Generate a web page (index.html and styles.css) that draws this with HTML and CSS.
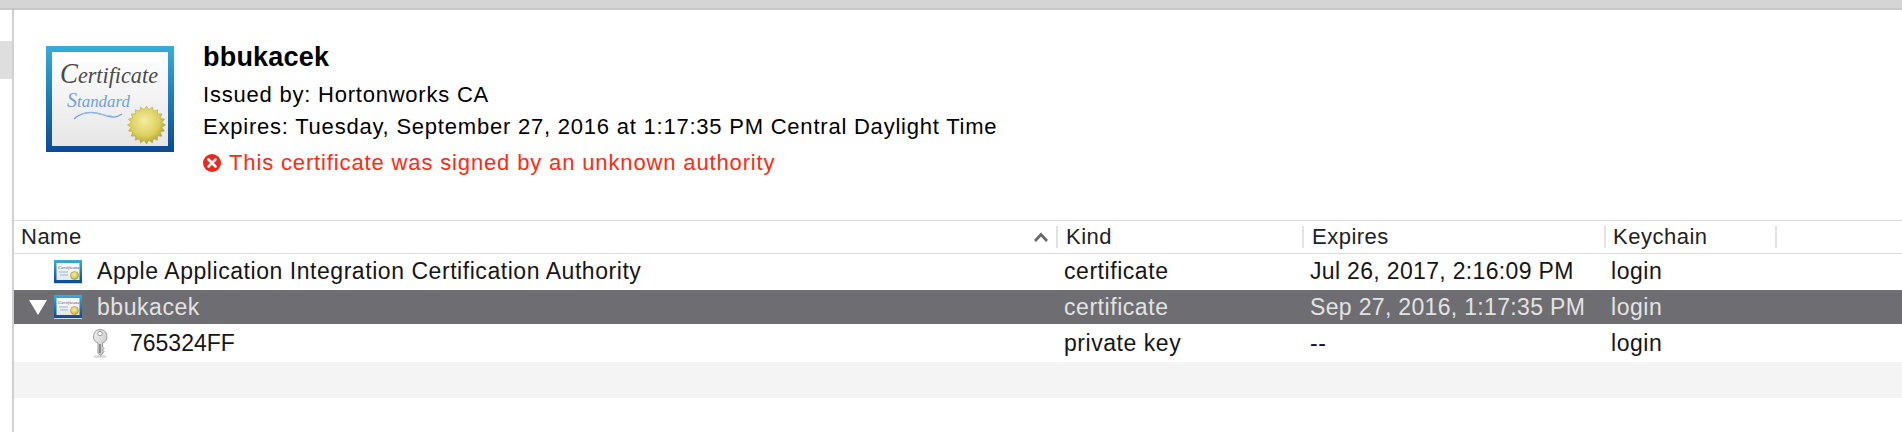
FILE: index.html
```html
<!DOCTYPE html>
<html lang="en">
<head>
<meta charset="utf-8">
<title>Certificate</title>
<link rel="stylesheet" href="styles.css">
</head>
<body>
<svg class="defs" width="0" height="0" aria-hidden="true">
  <defs>
    <linearGradient id="frame" x1="0" y1="0" x2="0" y2="1">
      <stop offset="0" stop-color="#34aedb"/>
      <stop offset=".5" stop-color="#1a7cbb"/>
      <stop offset="1" stop-color="#0c4a94"/>
    </linearGradient>
    <linearGradient id="paper" x1="0" y1="0" x2="0" y2="1">
      <stop offset="0" stop-color="#ffffff"/>
      <stop offset="1" stop-color="#e6e6e6"/>
    </linearGradient>
    <radialGradient id="gold" cx=".45" cy=".4" r=".65">
      <stop offset="0" stop-color="#f4eda0"/>
      <stop offset=".6" stop-color="#dccf5c"/>
      <stop offset="1" stop-color="#a89626"/>
    </radialGradient>
    <linearGradient id="silver" x1="0" y1="0" x2="1" y2="1">
      <stop offset="0" stop-color="#f4f4f4"/>
      <stop offset="1" stop-color="#bdbdbd"/>
    </linearGradient>
    <symbol id="mini-cert" viewBox="0 0 28 24">
      <rect x="0" y="0" width="28" height="24" fill="#d8d8d8"/>
      <rect x="0" y="0" width="28" height="23" fill="url(#frame)"/>
      <rect x="2.5" y="3" width="23" height="17" fill="url(#paper)"/>
      <text x="4" y="8.5" class="mini-script">Certificate</text>
      <path d="M5 12h9M6 15h8" stroke="#8fb6de" stroke-width="1" fill="none"/>
      <circle cx="20.5" cy="15.5" r="4" fill="url(#gold)" stroke="#a89626" stroke-width=".5"/>
    </symbol>
  </defs>
</svg>
<div class="topbar"></div>
<div class="window">
  <aside class="sidebar"><div class="side-item"></div></aside>
  <main class="content">
    <section class="summary">
      <svg class="cert" width="128" height="106" viewBox="0 0 128 106" role="img" aria-label="Certificate Standard">
        <rect width="128" height="106" fill="url(#frame)"/>
        <rect x="6" y="6" width="116" height="94" fill="url(#paper)"/>
        <text x="14" y="37" class="cert-title" textLength="98" lengthAdjust="spacingAndGlyphs"><tspan class="cert-cap">C</tspan>ertificate</text>
        <text x="21" y="61" class="cert-std" textLength="63" lengthAdjust="spacingAndGlyphs"><tspan class="std-cap">S</tspan>tandard</text>
        <path d="M28 73C38 64 50 66 58 69S70 72 76 68" fill="none" stroke="#6f9fdc" stroke-width="1.2"/>
        <path d="M36 68C46 64 56 70 66 70" fill="none" stroke="#9cbde6" stroke-width="1"/>
        <polygon transform="translate(100.5 79)" fill="url(#gold)" stroke="#b3a23a" stroke-width=".5" points="19,0 15.31,2.42 18.07,5.87 13.81,7.04 15.37,11.17 10.96,10.96 11.17,15.37 7.04,13.81 5.87,18.07 2.42,15.31 0,19 -2.42,15.31 -5.87,18.07 -7.04,13.81 -11.17,15.37 -10.96,10.96 -15.37,11.17 -13.81,7.04 -18.07,5.87 -15.31,2.42 -19,0 -15.31,-2.42 -18.07,-5.87 -13.81,-7.04 -15.37,-11.17 -10.96,-10.96 -11.17,-15.37 -7.04,-13.81 -5.87,-18.07 -2.42,-15.31 0,-19 2.42,-15.31 5.87,-18.07 7.04,-13.81 11.17,-15.37 10.96,-10.96 15.37,-11.17 13.81,-7.04 18.07,-5.87 15.31,-2.42"/>
      </svg>
      <div class="details">
        <h1 class="name">bbukacek</h1>
        <p class="line">Issued by: Hortonworks CA</p>
        <p class="line">Expires: Tuesday, September 27, 2016 at 1:17:35 PM Central Daylight Time</p>
        <p class="line error">
          <svg class="error-icon" width="18" height="18" viewBox="0 0 18 18" aria-hidden="true">
            <circle cx="9" cy="9" r="9" fill="#f0261a"/>
            <path d="M5.5 5.5l7 7M12.5 5.5l-7 7" stroke="#fff" stroke-width="2.6" stroke-linecap="round"/>
          </svg>
          This certificate was signed by an unknown authority
        </p>
      </div>
    </section>
    <section class="table">
      <div class="row head">
        <div class="cell name-head"><span>Name</span>
          <svg class="sort" width="14" height="10" viewBox="0 0 14 10" aria-hidden="true"><path d="M1 9l6-6.5L13 9" fill="none" stroke="#666" stroke-width="2.6"/></svg>
        </div>
        <div class="cell sep">Kind</div>
        <div class="cell sep">Expires</div>
        <div class="cell sep">Keychain</div>
        <div class="cell sep"></div>
      </div>
      <div class="row item">
        <div class="cell title level-cert"><svg class="mini" width="28" height="24"><use href="#mini-cert"/></svg>Apple Application Integration Certification Authority</div>
        <div class="cell">certificate</div>
        <div class="cell num">Jul 26, 2017, 2:16:09 PM</div>
        <div class="cell">login</div>
      </div>
      <div class="row item selected">
        <div class="cell title level-open">
          <svg class="disclosure" width="18" height="15" viewBox="0 0 18 15" aria-hidden="true"><path d="M0 0h18L9 15z" fill="#fff"/></svg>
          <svg class="mini" width="28" height="24"><use href="#mini-cert"/></svg>bbukacek</div>
        <div class="cell">certificate</div>
        <div class="cell num">Sep 27, 2016, 1:17:35 PM</div>
        <div class="cell">login</div>
      </div>
      <div class="row item tall">
        <div class="cell title level-key">
          <svg class="key" width="16" height="29" viewBox="0 0 16 29" aria-hidden="true">
            <ellipse cx="8" cy="27.5" rx="7" ry="1.3" fill="#d4d4d4"/>
            <path d="M8 .5a7 7 0 0 1 2.5 13.5V18l1.5 1.5-1.5 1.5 1.5 1.5L9 26.5l-3-2V14A7 7 0 0 1 8 .5z" fill="url(#silver)" stroke="#999"/>
            <circle cx="8" cy="4.5" r="2.2" fill="#fff" stroke="#999"/>
            <path d="M8 15v9" stroke="#444" stroke-width="1"/>
          </svg><span class="key-id">765324FF</span></div>
        <div class="cell">private key</div>
        <div class="cell">--</div>
        <div class="cell">login</div>
      </div>
      <div class="row stripe"></div>
    </section>
  </main>
</div>
</body>
</html>
```
FILE: styles.css
```css
* { box-sizing: border-box; }
html, body { margin: 0; padding: 0; height: 100%; overflow: hidden; }
body {
  display: flex;
  flex-direction: column;
  background: #fff;
  color: #161616;
  font-family: "Liberation Sans", Arial, sans-serif;
  font-size: 23px;
  letter-spacing: .55px;
}
.defs { position: absolute; }
.mini-script { font-family: "Liberation Serif", serif; font-style: italic; font-size: 5px; letter-spacing: 0; fill: #555; }
.topbar { height: 10px; flex: none; background: #d5d5d5; border-bottom: 2px solid #c8c8c8; }
.window { flex: 1; display: flex; min-height: 0; }
.sidebar { width: 14px; flex: none; border-right: 2px solid #d0d0d0; padding-top: 31px; }
.side-item { height: 38px; background: #dedede; }
.content { flex: 1; display: flex; flex-direction: column; min-width: 0; }

.summary { height: 210px; flex: none; display: flex; padding: 36px 0 0 32px; }
.cert { flex: none; }
.cert-title { font-family: "Liberation Serif", serif; font-style: italic; font-size: 24px; letter-spacing: 0; fill: #4a4a4a; }
.cert-cap { font-size: 29px; }
.cert-std { font-family: "Liberation Serif", serif; font-style: italic; font-size: 17px; letter-spacing: 0; fill: #6f9fdc; }
.std-cap { font-size: 20px; }
.details { margin-left: 29px; margin-top: -6px; }
.name { margin: 0 0 5px; font-size: 27px; line-height: 34px; font-weight: 700; color: #000; letter-spacing: .2px; }
.line { margin: 0; font-size: 22px; line-height: 32px; color: #000; display: flex; align-items: center; letter-spacing: .78px; }
.error { color: #ff2a12; margin-top: 4px; gap: 8px; letter-spacing: .86px; }
.error-icon { flex: none; }

.table { flex: 1; display: flex; flex-direction: column; }
.row {
  display: grid;
  grid-template-columns: 1042px 246px 302px 171px 1fr;
  align-items: center;
}
.cell { white-space: nowrap; padding-left: 8px; display: flex; align-items: center; }
.cell:nth-child(4) { padding-left: 7px; }
.num { letter-spacing: .33px; }
.head { height: 34px; border-top: 1px solid #dcdcdc; border-bottom: 1px solid #dcdcdc; color: #222; font-size: 22px; letter-spacing: .5px; }
.head .cell { height: 22px; }
.name-head { justify-content: space-between; padding-left: 7px; padding-right: 8px; }
.sep { border-left: 2px solid #e2e2e2; }
.item { height: 36px; padding-bottom: 1px; }
.selected { height: 34px; padding-bottom: 0; background: #6e6d72; color: #e3e3e3; }
.tall { height: 38px; padding-bottom: 0; }
.title { padding-left: 40px; }
.mini { flex: none; margin-right: 15px; }
.level-open { padding-left: 15px; }
.disclosure { flex: none; margin-right: 7px; }
.level-key { padding-left: 78px; }
.key { flex: none; margin-right: 22px; }
.key-id { letter-spacing: 0; }
.stripe { height: 36px; background: #f4f4f4; }
```
